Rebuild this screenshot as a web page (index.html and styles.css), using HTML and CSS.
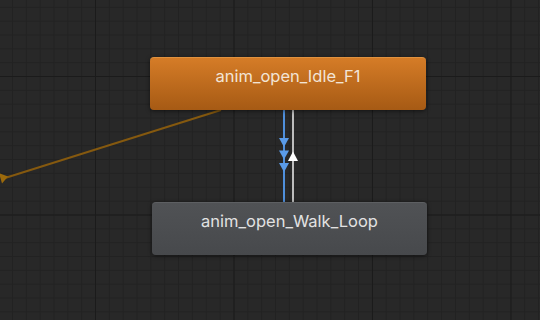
FILE: index.html
```html
<!DOCTYPE html>
<html lang="en">
<head>
  <meta charset="UTF-8">
  <meta name="viewport" content="width=device-width, initial-scale=1">
  <title>Animator Graph</title>
  <link rel="stylesheet" href="styles.css">
</head>
<body>
  <div class="graph">
    <!-- transitions sit under the state nodes -->
    <svg class="edges" width="540" height="320" viewBox="0 0 540 320">
      <line class="edge-orange" x1="221" y1="110" x2="5" y2="178"/>
      <polygon class="arrow-orange" points="-1,173 8,176.5 2,183.5"/>

      <line class="edge-blue" x1="284" y1="110" x2="284" y2="202"/>
      <polygon class="arrow-blue" points="279,138 289,138 284,147"/>
      <polygon class="arrow-blue" points="279,150.5 289,150.5 284,159.5"/>
      <polygon class="arrow-blue" points="279,163 289,163 284,172"/>

      <line class="edge-white" x1="293" y1="110" x2="293" y2="202"/>
      <polygon class="arrow-white" points="293,151.5 298,161 288,161"/>
    </svg>

    <div class="node node-default" style="left:150px; top:57px;">anim_open_Idle_F1</div>
    <div class="node node-state" style="left:152px; top:202px;">anim_open_Walk_Loop</div>
  </div>
</body>
</html>
```

FILE: styles.css
```css
body {
  margin: 0;
  background-color: #282828;
  font-family: Inter, "Noto Sans", sans-serif;
}
.graph {
  position: relative;
  width: 540px;
  height: 320px;
  overflow: hidden;
  background-color: #282828;
  background-image:
    linear-gradient(to right, #1b1b1b 0, #1b1b1b 1px, transparent 1px),
    linear-gradient(to bottom, #1b1b1b 0, #1b1b1b 1px, transparent 1px),
    linear-gradient(to right, #222 0, #222 1px, transparent 1px),
    linear-gradient(to bottom, #222 0, #222 1px, transparent 1px);
  background-size: 138.5px 138.5px, 138.5px 138.5px, 13.85px 13.85px, 13.85px 13.85px;
  background-position: 95px 76px, 95px 76px, 95px 76px, 95px 76px;
}
.edges {
  position: absolute;
  left: 0;
  top: 0;
}
.edge-orange {
  stroke: #85590f;
  stroke-width: 2;
}
.arrow-orange {
  fill: #9c6a0c;
}
.edge-blue {
  stroke: #4f8fdb;
  stroke-width: 2;
}
.arrow-blue {
  fill: #5a9be8;
}
.edge-white {
  stroke: #bdbdbd;
  stroke-width: 2;
}
.arrow-white {
  fill: #ffffff;
}
.node {
  position: absolute;
  box-sizing: border-box;
  height: 53px;
  padding-top: 8px;
  border-radius: 4px;
  font-size: 16.5px;
  line-height: 20px;
  text-align: center;
  box-shadow: 0 1px 4px rgba(0, 0, 0, 0.55);
}
.node-default {
  width: 276px;
  color: #f2e4d6;
  background: linear-gradient(to bottom, #d57c27, #a65a14);
  border-top: 1px solid #e0923f;
}
.node-state {
  width: 275px;
  color: #e2e2e2;
  background: linear-gradient(to bottom, #505255, #47494c);
  border-top: 1px solid #5d5f62;
}
```
